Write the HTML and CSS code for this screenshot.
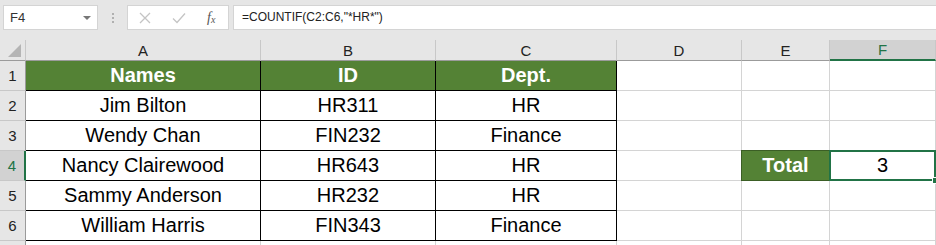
FILE: index.html
```html
<!DOCTYPE html>
<html>
<head>
<meta charset="utf-8">
<link rel="stylesheet" href="styles.css">
</head>
<body>
<div class="toolbar">
  <div class="namebox"><span class="ref">F4</span><span class="caret"></span></div>
  <div class="dots"><i></i><i></i><i></i></div>
  <div class="buttons">
    <svg class="btn" width="14" height="14" viewBox="0 0 14 14"><path d="M2 2L12 12M12 2L2 12" stroke="#c4c4c4" stroke-width="1.3" fill="none"/></svg>
    <svg class="btn" width="16" height="14" viewBox="0 0 16 14"><path d="M2 7.5L6 11.5L14 2.5" stroke="#c4c4c4" stroke-width="1.3" fill="none"/></svg>
    <span class="fx">f<sub>x</sub></span>
  </div>
  <div class="formula">=COUNTIF(C2:C6,"*HR*")</div>
</div>
<div class="sheet">
  <div class="corner"><span class="tri"></span></div>
  <div class="ch">A</div><div class="ch">B</div><div class="ch">C</div><div class="ch">D</div><div class="ch">E</div><div class="ch sel">F</div>

  <div class="rh">1</div>
  <div class="c t hd">Names</div><div class="c t hd">ID</div><div class="c t hd">Dept.</div><div class="c"></div><div class="c"></div><div class="c"></div>

  <div class="rh">2</div>
  <div class="c t">Jim Bilton</div><div class="c t">HR311</div><div class="c t">HR</div><div class="c"></div><div class="c"></div><div class="c"></div>

  <div class="rh">3</div>
  <div class="c t">Wendy Chan</div><div class="c t">FIN232</div><div class="c t">Finance</div><div class="c"></div><div class="c"></div><div class="c"></div>

  <div class="rh sel">4</div>
  <div class="c t">Nancy Clairewood</div><div class="c t">HR643</div><div class="c t">HR</div><div class="c"></div><div class="c hd tot">Total</div><div class="c active">3<span class="handle"></span></div>

  <div class="rh">5</div>
  <div class="c t">Sammy Anderson</div><div class="c t">HR232</div><div class="c t">HR</div><div class="c"></div><div class="c"></div><div class="c"></div>

  <div class="rh">6</div>
  <div class="c t">William Harris</div><div class="c t">FIN343</div><div class="c t">Finance</div><div class="c"></div><div class="c"></div><div class="c"></div>

  <div class="rh"></div>
  <div class="c"></div><div class="c"></div><div class="c"></div><div class="c"></div><div class="c"></div><div class="c"></div>
</div>
</body>
</html>
```
FILE: styles.css
```css
html, body {
  margin: 0;
  padding: 0;
  background: #e6e6e6;
  overflow: hidden;
  width: 936px;
  height: 245px;
}
.toolbar {
  height: 25px;
  padding-top: 5px;
  display: flex;
  background: #e6e6e6;
}
.namebox {
  margin-left: 3px;
  width: 93px;
  height: 23px;
  background: #fff;
  border: 1px solid #d4d4d4;
  display: flex;
  align-items: center;
  justify-content: space-between;
  box-sizing: content-box;
}
.ref {
  font-family: "Liberation Sans", Arial, sans-serif;
  font-size: 13px;
  color: #333;
  padding-left: 6px;
}
.caret {
  width: 0;
  height: 0;
  border-left: 4px solid transparent;
  border-right: 4px solid transparent;
  border-top: 4px solid #777;
  margin-right: 6px;
}
.dots {
  width: 29px;
  display: flex;
  flex-direction: column;
  align-items: center;
  justify-content: center;
  gap: 2px;
}
.dots i {
  display: block;
  width: 2px;
  height: 2px;
  background: #b0b0b0;
}
.buttons {
  width: 90px;
  height: 23px;
  background: #fff;
  border: 1px solid #d4d4d4;
  display: flex;
  align-items: center;
  padding-left: 10px;
  gap: 19px;
  box-sizing: content-box;
  margin-right: 4px;
}
.fx {
  font-family: "Liberation Serif", "Times New Roman", serif;
  font-style: italic;
  font-size: 14px;
  color: #555;
  margin-left: 1px;
}
.fx sub {
  font-size: 10px;
  vertical-align: -1px;
}
.formula {
  flex: 1;
  height: 23px;
  background: #fff;
  border: 1px solid #d4d4d4;
  border-right: none;
  font-family: "Liberation Sans", Arial, sans-serif;
  font-size: 12px;
  line-height: 23px;
  padding-left: 8px;
  color: #222;
}
.sheet {
  margin-top: 10px;
  display: grid;
  grid-template-columns: 26px 235px 175px 181px 125px 88px 106px;
  grid-template-rows: 21px repeat(7, 30px);
}
.corner {
  background: #e6e6e6;
  border-right: 1px solid #c8c8c8;
  border-bottom: 1px solid #9b9b9b;
  position: relative;
}
.tri {
  position: absolute;
  right: 4px;
  bottom: 3px;
  width: 0;
  height: 0;
  border-left: 13px solid transparent;
  border-bottom: 13px solid #b4b4b4;
}
.ch {
  background: #e6e6e6;
  border-right: 1px solid #c8c8c8;
  border-bottom: 1px solid #9b9b9b;
  font-family: "Liberation Sans", Arial, sans-serif;
  font-size: 15px;
  color: #222;
  text-align: center;
  line-height: 21px;
}
.ch.sel {
  background: #d2d2d2;
  color: #217346;
  border-bottom: 2px solid #217346;
  line-height: 20px;
}
.rh {
  background: #e6e6e6;
  border-right: 1px solid #9b9b9b;
  border-bottom: 1px solid #c8c8c8;
  font-family: "Liberation Sans", Arial, sans-serif;
  font-size: 15px;
  color: #222;
  text-align: center;
  line-height: 30px;
}
.rh.sel {
  background: #d2d2d2;
  color: #217346;
  border-right: 2px solid #217346;
}
.c {
  background: #fff;
  border-right: 1px solid #d4d4d4;
  border-bottom: 1px solid #d4d4d4;
  font-family: "Liberation Sans", Arial, sans-serif;
  font-size: 20px;
  color: #000;
  text-align: center;
  line-height: 29px;
  white-space: nowrap;
}
.c.t {
  border-right-color: #000;
  border-bottom-color: #000;
}
.c.hd {
  background: #548235;
  color: #fff;
  font-weight: bold;
}
.c.tot {
  border-right-color: #3b5e25;
  border-bottom-color: #3b5e25;
  border-top: 1px solid #3b5e25;
  border-left: 1px solid #3b5e25;
  margin: -1px 0 0 -1px;
}
.c.active {
  position: relative;
}
.c.active::after {
  content: "";
  position: absolute;
  left: -1px;
  top: -1px;
  right: -1px;
  bottom: -1px;
  border: 2px solid #217346;
}
.handle {
  position: absolute;
  right: -4px;
  bottom: -4px;
  width: 5px;
  height: 5px;
  background: #217346;
  border: 1px solid #fff;
  z-index: 2;
}
```
